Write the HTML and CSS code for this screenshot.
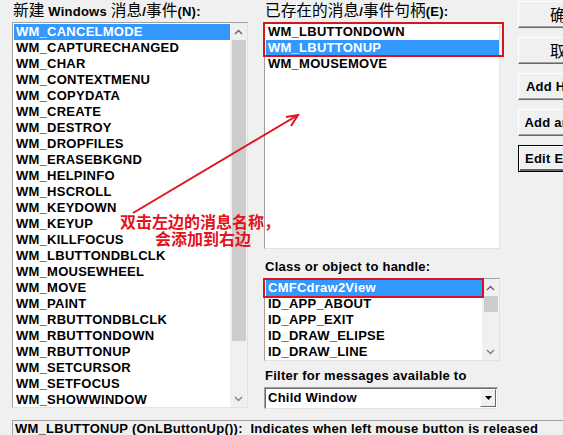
FILE: index.html
```html
<!DOCTYPE html>
<html>
<head>
<meta charset="utf-8">
<link rel="stylesheet" href="styles.css">
</head>
<body>
<div class="dlg">
  <div class="col col-left">
    <div class="lbl"><span class="cjk">新建</span> Windows <span class="cjk">消息</span>/<span class="cjk">事件</span>(N):</div>
    <div class="listbox lb-main">
      <ul class="items">
        <li class="sel">WM_CANCELMODE</li>
        <li>WM_CAPTURECHANGED</li>
        <li>WM_CHAR</li>
        <li>WM_CONTEXTMENU</li>
        <li>WM_COPYDATA</li>
        <li>WM_CREATE</li>
        <li>WM_DESTROY</li>
        <li>WM_DROPFILES</li>
        <li>WM_ERASEBKGND</li>
        <li>WM_HELPINFO</li>
        <li>WM_HSCROLL</li>
        <li>WM_KEYDOWN</li>
        <li>WM_KEYUP</li>
        <li>WM_KILLFOCUS</li>
        <li>WM_LBUTTONDBLCLK</li>
        <li>WM_MOUSEWHEEL</li>
        <li>WM_MOVE</li>
        <li>WM_PAINT</li>
        <li>WM_RBUTTONDBLCLK</li>
        <li>WM_RBUTTONDOWN</li>
        <li>WM_RBUTTONUP</li>
        <li>WM_SETCURSOR</li>
        <li>WM_SETFOCUS</li>
        <li>WM_SHOWWINDOW</li>
      </ul>
      <div class="vscroll">
        <div class="sarrow"><svg width="9" height="6" viewBox="0 0 9 6"><polyline points="1,5 4.5,1.5 8,5" fill="none" stroke="#606060" stroke-width="1.4"/></svg></div>
        <div class="track main-track"><div class="thumb main-thumb"></div></div>
        <div class="sarrow"><svg width="9" height="6" viewBox="0 0 9 6"><polyline points="1,1 4.5,4.5 8,1" fill="none" stroke="#808080" stroke-width="1.4"/></svg></div>
      </div>
    </div>
  </div>

  <div class="col col-mid">
    <div class="lbl"><span class="cjk">已存在的消息</span>/<span class="cjk">事件句柄</span>(E):</div>
    <div class="listbox lb-exist">
      <ul class="items">
        <li>WM_LBUTTONDOWN</li>
        <li class="sel">WM_LBUTTONUP</li>
        <li>WM_MOUSEMOVE</li>
      </ul>
      <div class="redbox rb-exist"></div>
    </div>
    <div class="lbl lbl-class">Class or object to handle:</div>
    <div class="listbox lb-class">
      <ul class="items">
        <li class="sel">CMFCdraw2View</li>
        <li>ID_APP_ABOUT</li>
        <li>ID_APP_EXIT</li>
        <li>ID_DRAW_ELIPSE</li>
        <li>ID_DRAW_LINE</li>
      </ul>
      <div class="vscroll">
        <div class="sarrow"><svg width="9" height="6" viewBox="0 0 9 6"><polyline points="1,5 4.5,1.5 8,5" fill="none" stroke="#606060" stroke-width="1.4"/></svg></div>
        <div class="track class-track"><div class="thumb class-thumb"></div></div>
        <div class="sarrow"><svg width="9" height="6" viewBox="0 0 9 6"><polyline points="1,1 4.5,4.5 8,1" fill="none" stroke="#808080" stroke-width="1.4"/></svg></div>
      </div>
      <div class="redbox rb-class"></div>
    </div>
    <div class="lbl lbl-filter">Filter for messages available to</div>
    <div class="combo">
      <div class="combo-text">Child Window</div>
      <div class="combo-btn"><svg width="7" height="4" viewBox="0 0 7 4"><polygon points="0,0 7,0 3.5,4" fill="#000"/></svg></div>
    </div>
  </div>

  <div class="col col-btns">
    <div class="btn cjk-btn">确定</div>
    <div class="btn cjk-btn">取消</div>
    <div class="btn">Add Handler</div>
    <div class="btn">Add and Edit</div>
    <div class="btn btn-default">Edit Existing</div>
  </div>
</div>
<div class="status">WM_LBUTTONUP (OnLButtonUp()):&nbsp; Indicates when left mouse button is released</div>

<svg class="arrow" width="563" height="435" viewBox="0 0 563 435">
  <line x1="133" y1="213" x2="298" y2="115" stroke="#e3121b" stroke-width="2"/>
  <polyline points="286,117 298,115 291,126" fill="none" stroke="#e3121b" stroke-width="2"/>
</svg>
<div class="note">
  <div class="note-l1">双击左边的消息名称，</div>
  <div class="note-l2">会添加到右边</div>
</div>
</body>
</html>
```

FILE: styles.css
```css
html, body {
  margin: 0;
  padding: 0;
}
body {
  width: 563px;
  height: 435px;
  overflow: hidden;
  background: #f0f0f0;
  font-family: "Liberation Sans", "Noto Sans CJK SC", sans-serif;
  font-weight: bold;
  font-size: 13px;
  letter-spacing: 0.25px;
  color: #000;
  position: relative;
}
.dlg {
  display: flex;
  padding-left: 12px;
  height: 420px;
  box-sizing: border-box;
}
.col { flex-shrink: 0; }
.col-left { width: 236px; }
.col-mid { width: 236px; margin-left: 16px; }
.col-btns {
  width: 96px;
  margin-left: 18px;
  padding-top: 1px;
  display: flex;
  flex-direction: column;
  gap: 9px;
}
.lbl {
  height: 22px;
  line-height: 20px;
  padding-left: 1px;
  white-space: nowrap;
  box-sizing: border-box;
}
.cjk {
  font-family: "Noto Sans CJK SC", sans-serif;
  font-weight: normal;
  font-size: 15.7px;
  letter-spacing: 0;
}
.lbl-class {
  height: 29px;
  padding-top: 8px;
}
.lbl-filter {
  height: 26px;
  padding-top: 5px;
}
.listbox {
  position: relative;
  display: flex;
  background: #fff;
  border: 1px solid;
  border-color: #a0a0a0 #e3e3e3 #e3e3e3 #a0a0a0;
  box-sizing: border-box;
}
.lb-main { height: 386px; }
.lb-exist { height: 227px; }
.lb-class { height: 83px; }
.items {
  list-style: none;
  margin: 0;
  padding: 1px 0 0 1px;
  flex: 1;
  overflow: hidden;
}
.items li {
  height: 16px;
  line-height: 16px;
  padding-left: 2px;
  white-space: nowrap;
}
.items li.sel {
  background: #3399ff;
  color: #fff;
}
.vscroll {
  width: 17px;
  display: flex;
  flex-direction: column;
  background: #f0f0f0;
}
.sarrow {
  height: 17px;
  display: flex;
  align-items: center;
  justify-content: center;
}
.track {
  flex: 1;
  position: relative;
}
.thumb {
  position: absolute;
  left: 2px;
  right: 1px;
  background: #cdcdcd;
}
.main-thumb { top: 0; height: 301px; }
.class-thumb { top: 0; height: 16px; }
.redbox {
  position: absolute;
  border: 2px solid #d8141f;
  box-sizing: border-box;
  pointer-events: none;
}
.rb-exist { left: -2px; top: -1px; width: 241px; height: 35px; }
.rb-class { left: -2px; top: -1px; width: 221px; height: 20px; }
.combo {
  height: 22px;
  width: 234px;
  display: flex;
  align-items: center;
  background: #fff;
  border: 1px solid;
  border-color: #a0a0a0 #e3e3e3 #e3e3e3 #a0a0a0;
  box-shadow: inset 1px 1px 0 #696969;
  box-sizing: border-box;
}
.combo-text {
  flex: 1;
  padding-left: 3px;
  line-height: 18px;
}
.combo-btn {
  width: 16px;
  height: 18px;
  margin-right: 1px;
  background: #f0f0f0;
  border: 1px solid;
  border-color: #fff #696969 #696969 #fff;
  box-sizing: border-box;
  display: flex;
  align-items: center;
  justify-content: center;
}
.btn {
  height: 27px;
  line-height: 25px;
  text-align: center;
  background: #f0f0f0;
  border: 1px solid;
  border-color: #fff #696969 #696969 #fff;
  box-shadow: inset -1px -1px 0 #a0a0a0;
  box-sizing: border-box;
  white-space: nowrap;
}
.cjk-btn {
  font-family: "Noto Sans CJK SC", sans-serif;
  font-weight: normal;
  font-size: 16px;
  letter-spacing: 0;
}
.btn-default {
  border-color: #000;
  box-shadow: inset 1px 1px 0 #fff, inset -2px -2px 0 #696969;
}
.status {
  margin-left: 12px;
  height: 15px;
  line-height: 16px;
  padding-left: 2px;
  border-top: 1px solid #a0a0a0;
  border-left: 1px solid #a0a0a0;
  white-space: nowrap;
}
.arrow {
  position: absolute;
  left: 0;
  top: 0;
  pointer-events: none;
}
.note {
  position: absolute;
  left: 120px;
  top: 213px;
  color: #e3121b;
  font-family: "Noto Sans CJK SC", sans-serif;
  font-weight: bold;
  font-size: 16px;
  line-height: 17px;
  letter-spacing: 0;
  white-space: nowrap;
}
.note-l2 { padding-left: 35px; }
```
